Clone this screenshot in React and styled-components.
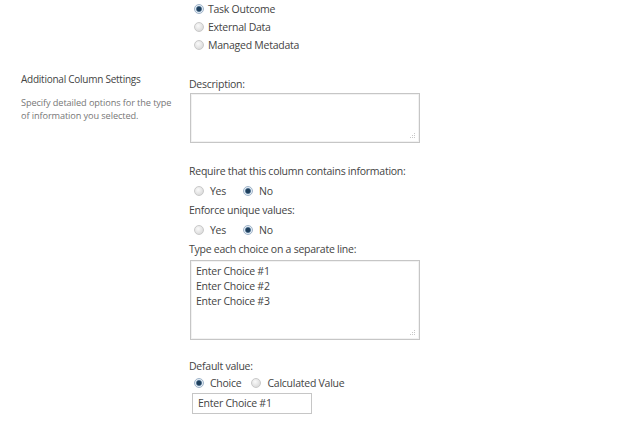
import React from 'react';
import styled, { createGlobalStyle } from 'styled-components';

const GlobalStyle = createGlobalStyle`
  body {
    margin: 0;
    background: #ffffff;
    font-family: "Open Sans", "Noto Sans", Arial, sans-serif;
    color: #444444;
  }
`;

const Page = styled.div`
  width: 624px;
  height: 432px;
  overflow: hidden;
  background: #ffffff;
`;

const TopChoices = styled.div`
  margin-left: 194px;
  display: flex;
  flex-direction: column;
`;

const Section = styled.div`
  display: grid;
  grid-template-columns: 168px 1fr;
  padding-left: 21px;
  margin-top: 16px;
`;

const SectionInfo = styled.div`
  display: flex;
  flex-direction: column;
`;

const SectionTitle = styled.div`
  font-size: 10px;
  letter-spacing: -0.25px;
  line-height: 18px;
  color: #444444;
`;

const SectionDesc = styled.div`
  margin-top: 8px;
  font-size: 9.2px;
  letter-spacing: -0.1px;
  line-height: 13px;
  color: #777777;
  width: 160px;
`;

const Fields = styled.div`
  display: flex;
  flex-direction: column;
  padding-top: 5px;
`;

const Label = styled.div`
  font-size: 10.5px;
  letter-spacing: -0.25px;
  line-height: ${(p) => p.$h || 19.5}px;
  margin-top: ${(p) => p.$gap || 0}px;
  color: #444444;
`;

const RadioRow = styled.div`
  display: flex;
  align-items: center;
  gap: ${(p) => p.$gap || 17}px;
  height: ${(p) => p.$h || 19.5}px;
  padding-left: ${(p) => p.$indent ?? 5}px;
`;

const RadioItem = styled.label`
  display: flex;
  align-items: center;
  gap: ${(p) => p.$gap || 6}px;
  font-size: 10.5px;
  letter-spacing: -0.25px;
  color: #444444;
  white-space: nowrap;
`;

const Dot = styled.span`
  width: 10px;
  height: 10px;
  box-sizing: border-box;
  border-radius: 50%;
  flex: none;
  border: 1px solid ${(p) => (p.$on ? '#9fb3c8' : '#c9c9c9')};
  background: ${(p) =>
    p.$on
      ? 'radial-gradient(circle, #1f3f5c 0 2px, #5d7e9c 2.6px, #e4edf5 3.4px)'
      : 'radial-gradient(circle at 40% 35%, #fafafa 0, #e2e2e2 60%, #d3d3d3 100%)'};
`;

const BoxWrap = styled.div`
  position: relative;
  width: 230px;
  height: ${(p) => p.$h}px;
  margin-left: 1px;
`;

const Area = styled.textarea`
  box-sizing: border-box;
  width: 100%;
  height: 100%;
  margin: 0;
  border: 1px solid #c6c6c6;
  box-shadow: inset 0 0 0 1px #f2f2f2;
  padding: 3px 5px;
  resize: none;
  overflow: hidden;
  font-family: "Open Sans", "Noto Sans", Arial, sans-serif;
  font-size: 10.5px;
  letter-spacing: -0.25px;
  line-height: 15px;
  color: #444444;
  background: #ffffff;
  outline: none;
`;

const Grip = styled.svg`
  position: absolute;
  right: 4px;
  bottom: 4px;
  width: 6px;
  height: 6px;
`;

const TextBox = styled.input`
  box-sizing: border-box;
  width: 120px;
  height: 21px;
  margin: 1px 0 0 3px;
  border: 1px solid #c6c6c6;
  padding: 0 5px;
  font-family: "Open Sans", "Noto Sans", Arial, sans-serif;
  font-size: 10.5px;
  letter-spacing: -0.25px;
  color: #444444;
  outline: none;
`;

function Radio({ label, on, gap }) {
  return (
    <RadioItem $gap={gap}>
      <Dot $on={on} />
      {label}
    </RadioItem>
  );
}

function GrowBox({ h, value }) {
  return (
    <BoxWrap $h={h}>
      <Area defaultValue={value} />
      <Grip viewBox="0 0 6 6">
        <rect x="4" y="0" width="1" height="1" fill="#c8c8c8" />
        <rect x="2" y="2" width="1" height="1" fill="#c8c8c8" />
        <rect x="4" y="2" width="1" height="1" fill="#c8c8c8" />
        <rect x="0" y="4" width="1" height="1" fill="#c8c8c8" />
        <rect x="2" y="4" width="1" height="1" fill="#c8c8c8" />
        <rect x="4" y="4" width="1" height="1" fill="#c8c8c8" />
      </Grip>
    </BoxWrap>
  );
}

const App = () => {
  return (
    <Page>
      <GlobalStyle />
      <TopChoices>
        <RadioRow $h={18} $indent={0}><Radio label="Task Outcome" on gap={4} /></RadioRow>
        <RadioRow $h={18} $indent={0}><Radio label="External Data" gap={4} /></RadioRow>
        <RadioRow $h={18} $indent={0}><Radio label="Managed Metadata" gap={4} /></RadioRow>
      </TopChoices>
      <Section>
        <SectionInfo>
          <SectionTitle>Additional Column Settings</SectionTitle>
          <SectionDesc>Specify detailed options for the type of information you selected.</SectionDesc>
        </SectionInfo>
        <Fields>
          <Label $h={18}>Description:</Label>
          <GrowBox h={50} value="" />
          <Label $gap={19}>Require that this column contains information:</Label>
          <RadioRow>
            <Radio label="Yes" />
            <Radio label="No" on />
          </RadioRow>
          <Label>Enforce unique values:</Label>
          <RadioRow>
            <Radio label="Yes" />
            <Radio label="No" on />
          </RadioRow>
          <Label>Type each choice on a separate line:</Label>
          <GrowBox h={80} value={'Enter Choice #1\nEnter Choice #2\nEnter Choice #3'} />
          <Label $h={18} $gap={17}>Default value:</Label>
          <RadioRow $h={17} $gap={10}>
            <Radio label="Choice" on />
            <Radio label="Calculated Value" />
          </RadioRow>
          <TextBox defaultValue="Enter Choice #1" />
        </Fields>
      </Section>
    </Page>
  );
};

export default App;
